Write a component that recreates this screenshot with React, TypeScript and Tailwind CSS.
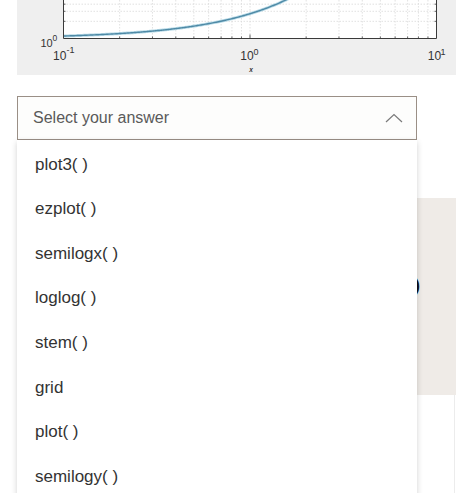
import React from "react";

const L = 46.5;
const R = 419.5;
const D = 186.5;
const B = 38.5;
const DY = 57;

function xpos(v: number) {
  return L + (Math.log10(v) + 1) * D;
}
function ypos(v: number) {
  return B - Math.log10(v) * DY;
}

function Chart() {
  const gridX: number[] = [];
  for (const dec of [0.1, 1]) {
    for (let k = 2; k <= 9; k++) gridX.push(xpos(k * dec));
  }
  gridX.push(xpos(1));
  const gridY = [2, 3, 4].map((k) => ypos(k));
  const pts: string[] = [];
  for (let i = 0; i <= 200; i++) {
    const lx = -1 + (i / 200) * 1.25;
    const v = Math.pow(10, lx);
    const y = ypos(Math.exp(v));
    pts.push(`${xpos(v).toFixed(2)},${y.toFixed(2)}`);
  }
  const minor: number[] = [];
  for (const dec of [0.1, 1]) {
    for (let k = 2; k <= 9; k++) minor.push(xpos(k * dec));
  }
  return (
    <svg width="439" height="75" viewBox="0 0 439 75" className="block">
      <rect x={L} y={-5} width={R - L} height={B + 5} fill="#ffffff" />
      {gridX.map((x, i) => (
        <line key={"gx" + i} x1={x} y1={0} x2={x} y2={B} stroke="#d9d9d9" strokeWidth="0.8" strokeDasharray="1.5 1.5" />
      ))}
      {gridY.map((y, i) => (
        <line key={"gy" + i} x1={L} y1={y} x2={R} y2={y} stroke="#d9d9d9" strokeWidth="0.8" strokeDasharray="1.5 1.5" />
      ))}
      <defs>
        <clipPath id="plotclip">
          <rect x={L} y={0} width={R - L} height={B} />
        </clipPath>
      </defs>
      <g clipPath="url(#plotclip)">
        <polyline points={pts.join(" ")} fill="none" stroke="#b9dbe8" strokeWidth="3" />
        <polyline points={pts.join(" ")} fill="none" stroke="#4f8aa6" strokeWidth="1.4" />
      </g>
      {minor.map((x, i) => (
        <line key={"mt" + i} x1={x} y1={B} x2={x} y2={B - 2} stroke="#404040" strokeWidth="0.8" />
      ))}
      <line x1={xpos(1)} y1={B} x2={xpos(1)} y2={B - 4} stroke="#404040" strokeWidth="0.8" />
      {gridY.map((y, i) => (
        <g key={"yt" + i}>
          <line x1={L} y1={y} x2={L + 2} y2={y} stroke="#404040" strokeWidth="0.8" />
          <line x1={R} y1={y} x2={R - 2} y2={y} stroke="#404040" strokeWidth="0.8" />
        </g>
      ))}
      <line x1={L} y1={0} x2={L} y2={B} stroke="#3a3a3a" strokeWidth="1" />
      <line x1={R} y1={0} x2={R} y2={B} stroke="#3a3a3a" strokeWidth="1" />
      <line x1={L} y1={B} x2={R} y2={B} stroke="#3a3a3a" strokeWidth="1" />
      <g fill="#333333" fontFamily="'Liberation Sans', Arial, sans-serif">
        <text x="23.5" y="46.8" fontSize="11">10</text>
        <text x="35.5" y="40.5" fontSize="8.5">0</text>
        <text x="36" y="60" fontSize="12">10</text>
        <text x="49.5" y="53" fontSize="9">-1</text>
        <text x="223.3" y="60" fontSize="12">10</text>
        <text x="236.5" y="54.5" fontSize="9">0</text>
        <text x="410.8" y="60" fontSize="12">10</text>
        <text x="423.5" y="54.5" fontSize="9">1</text>
        <text x="232.3" y="72" fontSize="6.5" fontStyle="italic" fontWeight="bold">x</text>
      </g>
    </svg>
  );
}

const items = ["plot3( )", "ezplot( )", "semilogx( )", "loglog( )", "stem( )", "grid", "plot( )", "semilogy( )"];

export default function App() {
  return (
    <div
      className="relative w-[474px] h-[493px] overflow-hidden bg-white"
      style={{ fontFamily: "'Liberation Sans', Arial, sans-serif" }}
    >
      <div className="ml-[17px] w-[439px] h-[75px] bg-[#efefef]">
        <Chart />
      </div>

      <div className="relative ml-[17px] mt-[21px] w-[400px] z-10">
        <div className="flex h-[44px] items-center justify-between border-[1.5px] border-[#9a8f86] bg-[#fdfdfc] pl-[15px] pr-[12px]">
          <span className="text-[16px] text-[#5a5a5a]">Select your answer</span>
          <svg width="18" height="10" viewBox="0 0 18 10" className="mr-[1px]">
            <path d="M1 9 L9 1.5 L17 9" fill="none" stroke="#7a7a7a" strokeWidth="1.2" />
          </svg>
        </div>
        <div className="absolute left-0 top-full w-[400px] bg-white pt-[2px] shadow-[0_2px_6px_rgba(0,0,0,0.18)]">
          {items.map((t) => (
            <div key={t} className="flex h-[44.6px] items-center pl-[18px] text-[17px] text-[#333333]">
              {t}
            </div>
          ))}
        </div>
      </div>

      <div className="ml-[17px] mt-[58px] flex h-[197px] w-[439px] justify-end bg-[#efebe7] pr-[36px] pt-[75px]">
        <span className="text-[19px] font-semibold leading-[24px] text-[#111111]">( )</span>
      </div>
      <div className="ml-[17px] h-[120px] w-[438px] border-r border-[#ececec] bg-white" />
    </div>
  );
}
